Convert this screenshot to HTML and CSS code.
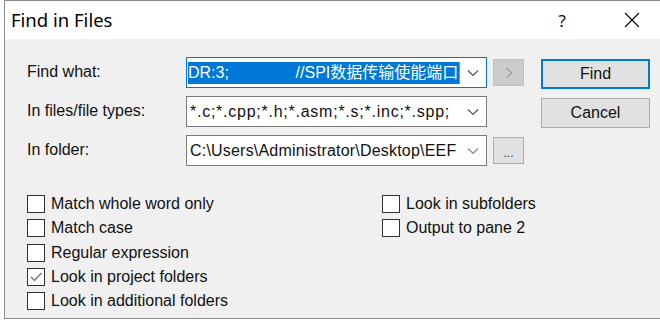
FILE: index.html
```html
<!DOCTYPE html>
<html>
<head>
<meta charset="utf-8">
<link rel="stylesheet" href="styles.css">
</head>
<body>
<div class="dialog">
  <div class="titlebar">
    <span class="title">Find in Files</span>
    <span class="help">?</span>
    <svg class="close" width="16" height="16" viewBox="0 0 16 16"><path d="M1 1 L15 15 M15 1 L1 15" stroke="#000" stroke-width="1.1" fill="none"/></svg>
  </div>
  <div class="content">
    <div class="top">
      <div class="form">
        <label class="lbl">Find what:</label>
        <div class="combo active">
          <span class="sel">DR:3;               //SPI数据传输使能端口</span><span class="caret"></span>
          <svg class="chev" width="12" height="8" viewBox="0 0 12 8"><path d="M1 1.5 L6 6.5 L11 1.5" stroke="#555" stroke-width="1.2" fill="none"/></svg>
        </div>
        <div class="small dis"><svg width="8" height="12" viewBox="0 0 8 12"><path d="M1.5 1 L6.5 6 L1.5 11" stroke="#9a9a9a" stroke-width="1.2" fill="none"/></svg></div>

        <label class="lbl">In files/file types:</label>
        <div class="combo">
          <span class="val types">*.c;*.cpp;*.h;*.asm;*.s;*.inc;*.spp;</span>
          <svg class="chev" width="12" height="8" viewBox="0 0 12 8"><path d="M1 1.5 L6 6.5 L11 1.5" stroke="#555" stroke-width="1.2" fill="none"/></svg>
        </div>
        <div></div>

        <label class="lbl">In folder:</label>
        <div class="combo">
          <span class="val path">C:\Users\Administrator\Desktop\EEF</span>
          <svg class="chev" width="12" height="8" viewBox="0 0 12 8"><path d="M1 1.5 L6 6.5 L11 1.5" stroke="#888" stroke-width="1.2" fill="none"/></svg>
        </div>
        <div class="small browse">...</div>
      </div>
      <div class="buttons">
        <div class="btn default">Find</div>
        <div class="btn">Cancel</div>
      </div>
    </div>
    <div class="options">
      <div class="col">
        <div class="chk"><span class="box"></span>Match whole word only</div>
        <div class="chk"><span class="box"></span>Match case</div>
        <div class="chk"><span class="box"></span>Regular expression</div>
        <div class="chk"><span class="box"><svg width="16" height="16" viewBox="0 0 16 16"><path d="M3 8 L6.5 11.5 L13.5 4" stroke="#777" stroke-width="1.4" fill="none"/></svg></span>Look in project folders</div>
        <div class="chk"><span class="box"></span>Look in additional folders</div>
      </div>
      <div class="col">
        <div class="chk"><span class="box"></span>Look in subfolders</div>
        <div class="chk"><span class="box"></span>Output to pane 2</div>
      </div>
    </div>
  </div>
</div>
<div class="below"></div>
</body>
</html>
```

FILE: styles.css
```css
html, body {
  margin: 0;
  padding: 0;
}
body {
  width: 660px;
  height: 326px;
  overflow: hidden;
  background: #fff;
  font-family: "Liberation Sans", Arial, sans-serif;
  color: #000;
}
.dialog {
  margin-left: 4px;
  width: 656px;
  height: 319px;
  border: 1px solid #8c8c8c;
  border-right: none;
  box-sizing: border-box;
  display: flex;
  flex-direction: column;
  background: #f0f0f0;
}
.titlebar {
  height: 38px;
  background: #fff;
  display: flex;
  align-items: center;
  padding-left: 6px;
}
.title {
  font-family: "Noto Sans", "Open Sans", sans-serif;
  font-size: 18.5px;
  flex: 1;
  padding-bottom: 1px;
}
.help {
  font-family: "Noto Sans", sans-serif;
  font-size: 17px;
  color: #111;
  margin-right: 58px;
}
.close {
  margin-right: 20px;
}
.content {
  flex: 1;
  padding: 18px 0 0 22px;
}
.top {
  display: flex;
}
.form {
  display: grid;
  grid-template-columns: 159px 301px 37px;
  grid-template-rows: 31px 31px 31px;
  row-gap: 8px;
  align-items: center;
}
.lbl {
  font-size: 16px;
  color: #111;
  padding-bottom: 1px;
}
.combo {
  height: 31px;
  box-sizing: border-box;
  border: 1px solid #7a7a7a;
  background: #fff;
  display: flex;
  align-items: center;
  padding-left: 1px;
  font-size: 16px;
  color: #111;
  position: relative;
}
.combo.active {
  border-color: #0078d7;
}
.sel {
  background: #0078d7;
  color: #fff;
  height: 22px;
  line-height: 22px;
  width: 271px;
  white-space: pre;
  overflow: hidden;
  font-family: "Liberation Sans", "Noto Sans CJK SC", sans-serif;
}
.caret {
  width: 1px;
  height: 22px;
  background: #e07a2a;
}
.val {
  padding-left: 2px;
  flex: 1;
  white-space: nowrap;
  overflow: hidden;
}
.types {
  letter-spacing: 0.75px;
}
.path {
  letter-spacing: 0.2px;
}
.chev {
  position: absolute;
  right: 7px;
  top: 11px;
}
.small {
  width: 31px;
  height: 27px;
  margin-left: 6px;
  box-sizing: border-box;
  border: 1px solid #adadad;
  display: flex;
  align-items: center;
  justify-content: center;
}
.dis {
  background: #cccccc;
  border-color: #bfbfbf;
}
.browse {
  background: #e1e1e1;
  font-size: 12px;
  color: #333;
  line-height: 1;
  padding-top: 4px;
}
.buttons {
  margin-left: 17px;
  margin-top: 2px;
  display: flex;
  flex-direction: column;
  gap: 9px;
}
.btn {
  width: 109px;
  height: 30px;
  box-sizing: border-box;
  border: 1px solid #adadad;
  background: #e1e1e1;
  display: flex;
  align-items: center;
  justify-content: center;
  font-size: 16px;
  color: #111;
}
.btn.default {
  border: 2px solid #0078d7;
}
.options {
  display: flex;
  margin-top: 29px;
}
.col {
  display: flex;
  flex-direction: column;
  gap: 6.3px;
}
.col:first-child {
  width: 355px;
}
.chk {
  display: flex;
  align-items: center;
  height: 18px;
  font-size: 16px;
  color: #111;
}
.box {
  width: 18px;
  height: 18px;
  box-sizing: border-box;
  border: 1px solid #333;
  background: #fff;
  margin-right: 6px;
  display: flex;
  align-items: center;
  justify-content: center;
  flex: none;
}
.box svg {
  display: block;
}
.below {
  height: 7px;
  background: #fff;
}
```
